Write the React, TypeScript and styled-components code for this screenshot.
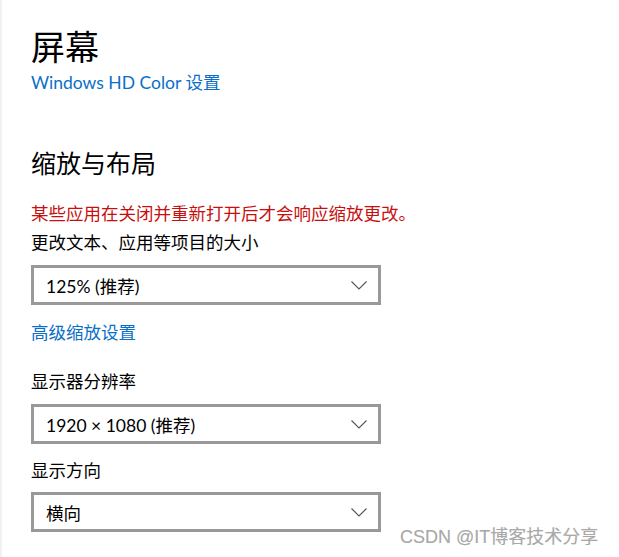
import React from "react";
import styled, { createGlobalStyle } from "styled-components";

const Global = createGlobalStyle`
  html, body { margin: 0; padding: 0; background: #ffffff; }
  body { font-family: "Lato", "Noto Sans CJK SC", sans-serif; }
`;

const Page = styled.div`
  position: relative;
  width: 619px;
  height: 557px;
  box-sizing: border-box;
  border-left: 2px solid #f2f2f2;
  padding: 26px 0 0 29px;
  overflow: hidden;
  display: flex;
  flex-direction: column;
  font-family: "Lato", "Noto Sans CJK SC", sans-serif;
  color: #000;
`;

const Title = styled.h1`
  margin: 0;
  font-family: "Noto Sans CJK SC", sans-serif;
  font-weight: 400;
  font-size: 34px;
  line-height: 40px;
  height: 40px;
`;

const Link = styled.a<{ $mt?: number }>`
  display: block;
  margin-top: ${(p) => p.$mt ?? 0}px;
  color: #0a6fc8;
  font-size: 17.5px;
  line-height: 24px;
  height: 24px;
  text-decoration: none;
  white-space: nowrap;
`;

const Subtitle = styled.h2`
  margin: 51px 0 0;
  font-family: "Noto Sans CJK SC", sans-serif;
  font-weight: 400;
  font-size: 25px;
  line-height: 32px;
  height: 32px;
`;

const Text = styled.div<{ $mt?: number; $warn?: boolean }>`
  margin-top: ${(p) => p.$mt ?? 0}px;
  font-size: 17.5px;
  line-height: 24px;
  height: 24px;
  color: ${(p) => (p.$warn ? "#c80f0f" : "#000")};
  white-space: nowrap;
`;

const Select = styled.div<{ $mt?: number }>`
  margin-top: ${(p) => p.$mt ?? 0}px;
  width: 350px;
  height: 40px;
  box-sizing: border-box;
  border: 3px solid #999999;
  background: #fff;
  display: flex;
  align-items: center;
  justify-content: space-between;
  padding: 0 11px 0 12px;
  font-size: 17.5px;
  color: #000;
  white-space: nowrap;
`;

const Chevron = () => (
  <svg width="16" height="9" viewBox="0 0 16 9" fill="none">
    <path d="M0.5 0.5 L8 8 L15.5 0.5" stroke="#555" strokeWidth="1.1" />
  </svg>
);

const Watermark = styled.div`
  position: absolute;
  left: 398px;
  top: 525px;
  font-family: "Liberation Sans", "Noto Sans CJK SC", sans-serif;
  font-size: 18px;
  line-height: 24px;
  color: #a8a8a8;
  text-shadow: 0 0 1px #e6e6e6;
  white-space: nowrap;
`;

export default function App() {
  return (
    <>
      <Global />
      <Page>
        <Title>屏幕</Title>
        <Link $mt={5}>Windows HD Color 设置</Link>
        <Subtitle>缩放与布局</Subtitle>
        <Text $mt={24} $warn>某些应用在关闭并重新打开后才会响应缩放更改。</Text>
        <Text $mt={5}>更改文本、应用等项目的大小</Text>
        <Select $mt={10}>
          <span>125% (推荐)</span>
          <Chevron />
        </Select>
        <Link $mt={16}>高级缩放设置</Link>
        <Text $mt={25}>显示器分辨率</Text>
        <Select $mt={10}>
          <span>1920 × 1080 (推荐)</span>
          <Chevron />
        </Select>
        <Text $mt={15}>显示方向</Text>
        <Select $mt={9}>
          <span>横向</span>
          <Chevron />
        </Select>
        <Watermark>CSDN @IT博客技术分享</Watermark>
      </Page>
    </>
  );
}
